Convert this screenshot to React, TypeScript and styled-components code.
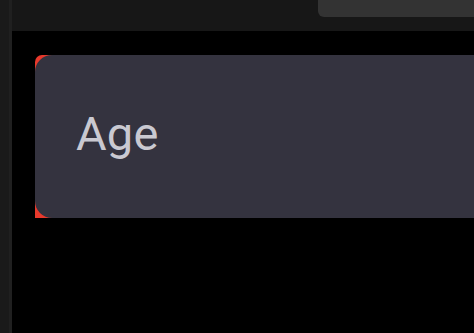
import React from 'react';
import styled, { createGlobalStyle } from 'styled-components';

const GlobalStyle = createGlobalStyle`
  html, body {
    margin: 0;
    padding: 0;
    background: #000;
    font-family: Roboto, "Noto Sans", sans-serif;
    overflow: hidden;
  }
`;

const Screen = styled.div`
  display: flex;
  width: 474px;
  height: 333px;
  background: #000;
`;

const SideRail = styled.div`
  width: 9px;
  flex-shrink: 0;
  background: #1a1a1a;
  border-right: 3px solid #202020;
`;

const Main = styled.div`
  flex: 1;
  display: flex;
  flex-direction: column;
  min-width: 0;
`;

const TopBar = styled.div`
  height: 31px;
  flex-shrink: 0;
  background: #171717;
  display: flex;
  justify-content: flex-end;
  align-items: flex-start;
`;

const SearchBox = styled.div`
  width: 170px;
  height: 17px;
  margin-right: -14px;
  background: #333333;
  border-bottom-left-radius: 6px;
`;

const Content = styled.div`
  padding: 24px 0 0 23px;
`;

const CardFrame = styled.div<{ $accent: string }>`
  background: ${(p) => p.$accent};
  border-top-left-radius: 7px;
  margin-right: -20px;
`;

const Card = styled.div`
  height: 163px;
  box-sizing: border-box;
  background: #34333f;
  border-radius: 17px;
  display: flex;
  align-items: center;
  padding: 0 0 6px 41px;
`;

const Label = styled.span`
  color: #c9c9d1;
  font-size: 47px;
  font-weight: 400;
  letter-spacing: 0.2px;
`;

export default function App() {
  return (
    <Screen>
      <GlobalStyle />
      <SideRail />
      <Main>
        <TopBar>
          <SearchBox />
        </TopBar>
        <Content>
          <CardFrame $accent="#e8392c">
            <Card>
              <Label>Age</Label>
            </Card>
          </CardFrame>
        </Content>
      </Main>
    </Screen>
  );
}
